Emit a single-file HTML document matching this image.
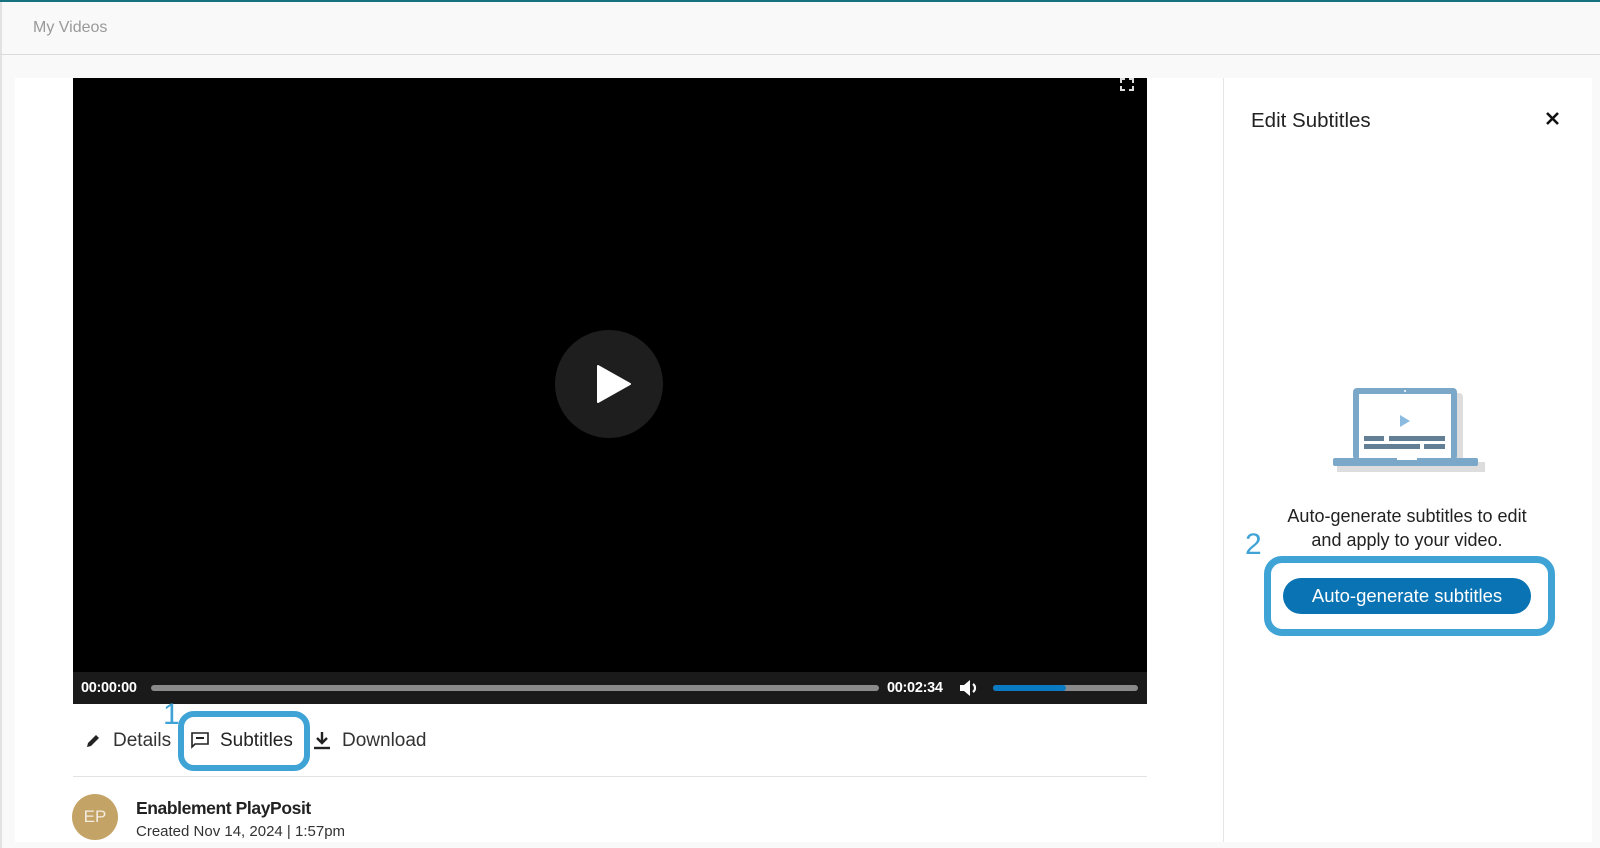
<!DOCTYPE html>
<html><head><meta charset="utf-8"><style>
*{margin:0;padding:0;box-sizing:border-box}
body{width:1600px;height:848px;background:#f9f9f9;font-family:"Liberation Sans",sans-serif;position:relative;overflow:hidden}
.a{position:absolute}
</style></head><body>
<div class="a" style="left:0;top:0;width:1600px;height:2px;background:#17727f"></div>
<div class="a" style="left:0;top:2px;width:2px;height:846px;background:#e2e2e2"></div>
<div class="a" style="left:33px;top:19px;font-size:16px;color:#999">My Videos</div>
<div class="a" style="left:0;top:54px;width:1600px;height:1px;background:#dcdcdc"></div>
<div class="a" style="left:15px;top:78px;width:1577px;height:764px;background:#fff"></div>
<div class="a" style="left:1223px;top:78px;width:1px;height:764px;background:#e6e6e6"></div>
<!-- video -->
<div class="a" style="left:73px;top:78px;width:1074px;height:626px;background:#000"></div>
<svg class="a" style="left:1120px;top:78px" width="14" height="13" viewBox="0 0 14 13"><path d="M1 5V1h4M9 1h4v4M13 8v4H9M5 12H1V8" stroke="#ddd" stroke-width="2" fill="none"/></svg>
<div class="a" style="left:555px;top:330px;width:108px;height:108px;border-radius:50%;background:#1e1e1e"></div>
<svg class="a" style="left:596px;top:364px" width="36" height="40"><path d="M2 2L34 20 2 38Z" fill="#fff" stroke="#fff" stroke-width="2" stroke-linejoin="round"/></svg>
<div class="a" style="left:73px;top:672px;width:1074px;height:32px;background:#1a1a1a"></div>
<div class="a" style="left:81px;top:680px;font-size:14.5px;color:#fff;font-weight:bold;letter-spacing:-0.3px">00:00:00</div>
<div class="a" style="left:151px;top:685px;width:728px;height:6px;border-radius:3px;background:#8a8a8a"></div>
<div class="a" style="left:887px;top:680px;font-size:14.5px;color:#fff;font-weight:bold;letter-spacing:-0.3px">00:02:34</div>
<svg class="a" style="left:959px;top:678px" width="22" height="20" viewBox="0 0 22 20"><path d="M1 7h4l6-5v16l-6-5H1z" fill="#fff"/><path d="M14 6a5 5 0 0 1 0 8" stroke="#fff" stroke-width="2.2" fill="none"/></svg>
<div class="a" style="left:993px;top:685px;width:145px;height:6px;border-radius:3px;background:#8a8a8a"></div>
<div class="a" style="left:993px;top:685px;width:73px;height:6px;border-radius:3px;background:#0a7ac3"></div>
<!-- tabs -->
<svg class="a" style="left:85px;top:733px" width="16" height="16" viewBox="0 0 16 16"><path d="M2 14l1-4 8-8 3 3-8 8z" fill="#222"/></svg>
<div class="a" style="left:113px;top:730px;font-size:19px;color:#333">Details</div>
<div class="a" style="left:163px;top:700px;font-size:30px;color:#3fa3d6;line-height:1">1</div>
<div class="a" style="left:178px;top:711px;width:132px;height:60px;border:6px solid #3fa3d6;border-radius:16px;background:#fff"></div>
<svg class="a" style="left:191px;top:732px" width="18" height="17" viewBox="0 0 18 17"><path d="M1 1h16v11H4l-3 3z" stroke="#222" stroke-width="1.6" fill="none"/><path d="M5 6h8" stroke="#222" stroke-width="2"/></svg>
<div class="a" style="left:220px;top:730px;font-size:19px;color:#222">Subtitles</div>
<svg class="a" style="left:313px;top:731px" width="18" height="19" viewBox="0 0 18 19"><path d="M9 1v10M4 7l5 5 5-5" stroke="#222" stroke-width="2.4" fill="none"/><path d="M1 17h16" stroke="#222" stroke-width="2.4"/></svg>
<div class="a" style="left:342px;top:730px;font-size:19px;color:#333">Download</div>
<div class="a" style="left:73px;top:776px;width:1074px;height:1px;background:#e3e3e3"></div>
<div class="a" style="left:72px;top:794px;width:46px;height:46px;border-radius:50%;background:#c4a366;color:#f3ece0;font-size:17px;text-align:center;line-height:46px">EP</div>
<div class="a" style="left:136px;top:798px;font-size:17.5px;color:#222;font-weight:bold;letter-spacing:-0.4px">Enablement PlayPosit</div>
<div class="a" style="left:136px;top:823px;font-size:15px;color:#333">Created Nov 14, 2024 | 1:57pm</div>
<!-- sidebar -->
<div class="a" style="left:1251px;top:109px;font-size:20.5px;color:#222">Edit Subtitles</div>
<svg class="a" style="left:1545px;top:111px" width="15" height="15"><path d="M2 2l11 11M13 2L2 13" stroke="#111" stroke-width="2.6"/></svg>
<svg class="a" style="left:1333px;top:388px" width="156" height="92" viewBox="0 0 156 92">
<rect x="26" y="5" width="104" height="72" rx="4" fill="#ddd"/>
<rect x="20" y="0" width="104" height="72" rx="4" fill="#7ba7c9"/>
<rect x="26" y="6" width="92" height="64" fill="#fff"/>
<circle cx="72" cy="3" r="1" fill="#fff"/>
<path d="M67 39v-12l10 6z" fill="#8cbbe0"/>
<rect x="31" y="48" width="20" height="5" fill="#627f95"/><rect x="56" y="48" width="56" height="5" fill="#627f95"/>
<rect x="31" y="56" width="56" height="5" fill="#627f95"/><rect x="91" y="56" width="21" height="5" fill="#627f95"/>
<rect x="4" y="74" width="148" height="10" fill="#ddd"/>
<rect x="0" y="70" width="145" height="8" rx="2" fill="#7ba7c9"/>
<rect x="64" y="70" width="20" height="2" fill="#fff"/>
</svg>
<div class="a" style="left:1257px;top:504px;width:300px;text-align:center;font-size:18px;line-height:24px;color:#222">Auto-generate subtitles to edit<br>and apply to your video.</div>
<div class="a" style="left:1245px;top:530px;font-size:30px;color:#3fa3d6;line-height:1">2</div>
<div class="a" style="left:1264px;top:556px;width:291px;height:80px;border:7px solid #3fa3d6;border-radius:18px;background:#fff"></div>
<div class="a" style="left:1283px;top:578px;width:248px;height:36px;border-radius:18px;background:#0a73b4;color:#fff;font-size:18.5px;text-align:center;line-height:36px">Auto-generate subtitles</div>
</body></html>
